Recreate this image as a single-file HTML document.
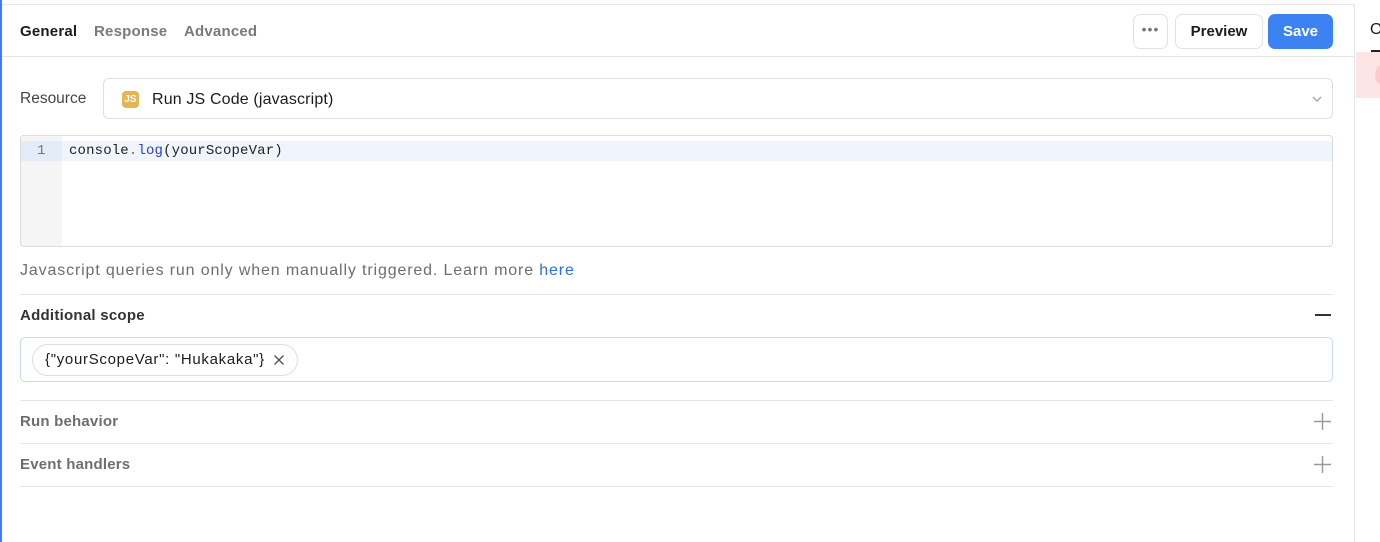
<!DOCTYPE html>
<html><head><meta charset="utf-8"><style>
*{box-sizing:border-box;margin:0;padding:0}
body{width:1380px;height:542px;overflow:hidden;background:#fff;font-family:"Liberation Sans",sans-serif;position:relative;color:#1c1c1c}
.a{position:absolute}
.hl{position:absolute;height:1px;background:#e6e6e6}
.t{position:absolute;font-size:15px;white-space:nowrap;line-height:20px}
</style></head><body>
<div class="a" style="left:0;top:0;width:2px;height:542px;background:#3d7ff0"></div>
<div class="hl" style="left:2px;top:4px;width:1352px"></div>
<div class="hl" style="left:2px;top:56px;width:1352px"></div>
<div class="a" style="left:1354px;top:4px;width:1px;height:538px;background:#e6e6e6"></div>
<div class="t" style="left:20px;top:22px;font-weight:bold;color:#1c1c1c;letter-spacing:0.2px">General</div>
<div class="t" style="left:94px;top:22px;font-weight:bold;color:#7a7a7a;letter-spacing:0.2px">Response</div>
<div class="t" style="left:184px;top:22px;font-weight:bold;color:#7a7a7a;letter-spacing:0.2px">Advanced</div>
<div class="a" style="left:1133px;top:14px;width:35px;height:35px;border:1px solid #e2e2e2;border-radius:7px;text-align:center;line-height:28px;color:#777;font-size:14px;letter-spacing:1px">•••</div>
<div class="a" style="left:1175px;top:14px;width:88px;height:35px;border:1px solid #e2e2e2;border-radius:7px;text-align:center;line-height:33px;font-size:15px;font-weight:bold">Preview</div>
<div class="a" style="left:1268px;top:14px;width:65px;height:35px;background:#3c82f0;border-radius:7px;text-align:center;line-height:35px;font-size:15px;font-weight:bold;color:#fff">Save</div>
<div class="t" style="left:1370px;top:20px;font-size:16px">O</div>
<div class="a" style="left:1371px;top:50px;width:9px;height:2px;background:#222"></div>
<div class="a" style="left:1356px;top:52px;width:24px;height:46px;background:#fde5e5"></div>
<div class="a" style="left:1375px;top:65px;width:14px;height:20px;border-radius:50%;background:#fbcccc"></div>

<div class="t" style="left:20px;top:89px;color:#444;font-size:15.5px">Resource</div>
<div class="a" style="left:103px;top:78px;width:1230px;height:41px;border:1px solid #dedede;border-radius:6px"></div>
<div class="a" style="left:122px;top:91px;width:17px;height:17px;background:#e3b654;border-radius:4px;color:#fff;font-size:10px;font-weight:bold;text-align:center;line-height:17px">JS</div>
<div class="t" style="left:152px;top:90px;font-size:16px;letter-spacing:0.15px">Run JS Code (javascript)</div>
<svg class="a" style="left:1311px;top:95px" width="12" height="8" viewBox="0 0 12 8"><path d="M2 2l4 4 4-4" stroke="#aaa" stroke-width="1.5" fill="none"/></svg>

<div class="a" style="left:20px;top:135px;width:1313px;height:112px;border:1px solid #dcdcdc;border-radius:4px;overflow:hidden">
<div class="a" style="left:0;top:0;width:41px;height:112px;background:#f5f5f5"></div>
<div class="a" style="left:0;top:5px;width:1313px;height:20px;background:#eef5fd"></div>
<div class="a" style="left:0;top:5px;width:41px;height:20px;background:#e4ecf7"></div>
<div class="t" style="left:16px;top:5px;font-family:'Liberation Mono',monospace;font-size:14px;color:#6b7a90">1</div>
<div class="t" style="left:48px;top:5px;font-family:'Liberation Mono',monospace;font-size:14px;color:#222;letter-spacing:0.15px">console<span style="color:#c2561c">.</span><span style="color:#2b3fc4">log</span>(yourScopeVar)</div>
</div>

<div class="t" style="left:20px;top:261px;font-size:16px;color:#6e6e6e;letter-spacing:0.86px">Javascript queries run only when manually triggered. Learn more <span style="color:#2f6ee0">here</span></div>
<div class="hl" style="left:20px;top:294px;width:1313px"></div>
<div class="t" style="left:20px;top:306px;font-weight:bold;color:#333;letter-spacing:0.25px">Additional scope</div>
<div class="a" style="left:1315px;top:314px;width:16px;height:2px;background:#333"></div>
<div class="a" style="left:20px;top:337px;width:1313px;height:45px;border:1px solid #c9d9ec;border-radius:5px"></div>
<div class="a" style="left:32px;top:344px;width:266px;height:32px;border:1px solid #dedede;border-radius:16px"></div>
<div class="t" style="left:45px;top:350px;font-size:15px;letter-spacing:0.7px">{"yourScopeVar": "Hukakaka"}</div>
<svg class="a" style="left:273px;top:354px" width="12" height="12" viewBox="0 0 12 12"><path d="M1.5 1.5l9 9M10.5 1.5l-9 9" stroke="#555" stroke-width="1.4"/></svg>
<div class="hl" style="left:20px;top:400px;width:1313px"></div>
<div class="t" style="left:20px;top:412px;font-weight:bold;color:#6e6e6e;letter-spacing:0.2px">Run behavior</div>
<svg class="a" style="left:1314px;top:413px" width="17" height="17"><path d="M8.5 0v17M0 8.5h17" stroke="#999" stroke-width="1.4"/></svg>
<div class="hl" style="left:20px;top:443px;width:1313px"></div>
<div class="t" style="left:20px;top:455px;font-weight:bold;color:#6e6e6e;letter-spacing:0.2px">Event handlers</div>
<svg class="a" style="left:1314px;top:456px" width="17" height="17"><path d="M8.5 0v17M0 8.5h17" stroke="#999" stroke-width="1.4"/></svg>
<div class="hl" style="left:20px;top:486px;width:1313px"></div>
</body></html>
